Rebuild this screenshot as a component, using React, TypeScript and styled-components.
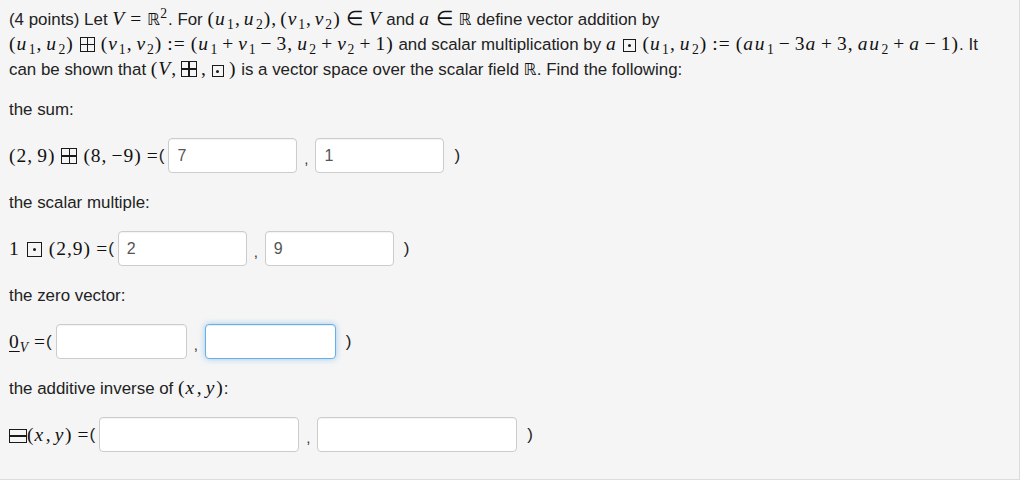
import React from "react";
import styled, { createGlobalStyle, css } from "styled-components";

const GlobalStyle = createGlobalStyle`
  html, body {
    margin: 0;
    padding: 0;
    background: #ffffff;
  }
  * {
    box-sizing: border-box;
  }
`;

const Panel = styled.div`
  width: 1020px;
  height: 480px;
  background-color: #f5f5f5;
  border-right: 1px solid #dcdcdc;
  border-bottom: 1px solid #dcdcdc;
  padding: 7px 9px 0 9px;
  font-family: "Liberation Sans", Arial, sans-serif;
  font-size: 16.9px;
  color: #222;
  overflow: hidden;
`;

const Intro = styled.p`
  margin: 0;
  line-height: 25px;
  white-space: nowrap;
`;

const Label = styled.p`
  margin: 16px 0 0 0;
  line-height: 24px;
`;

const Row = styled.div`
  display: flex;
  align-items: center;
  height: 35px;
  margin-top: 16px;

  & + p {
    margin-top: 18px;
  }
`;

const Math = styled.span`
  font-family: "Liberation Serif", "Times New Roman", serif;
  font-size: 19.5px;
  line-height: 1;
  letter-spacing: 1px;
  color: #111;
  white-space: nowrap;
`;

// TeX italics run wider than Times italics
const Var = styled.i<{ $extra?: number }>`
  font-style: italic;
  letter-spacing: ${(p) => 1 + (p.$extra ?? 0.8)}px;
`;

const Sub = styled.sub`
  font-size: 70%;
  vertical-align: -0.3em;
  line-height: 0;
`;

const Sup = styled.sup`
  font-size: 70%;
  vertical-align: 0.55em;
  line-height: 0;
`;

const DoubleStruck = styled.span`
  font-family: "DejaVu Sans", sans-serif;
  font-size: 0.84em;
  letter-spacing: 0;
`;

const Underlined = styled.span`
  text-decoration: underline;
  text-underline-offset: 3px;
  text-decoration-thickness: 1px;
`;

// spacing around binary operators and relations, as TeX sets them
const Op = styled.span<{ $rel?: boolean; $end?: boolean }>`
  margin-left: ${(p) => (p.$rel ? 5 : 4)}px;
  margin-right: ${(p) => (p.$end ? 0 : p.$rel ? 5 : 4)}px;
`;

const Sep = styled.span<{ $w?: number }>`
  margin-right: ${(p) => p.$w ?? 3}px;
`;

type BoxKind = "plus" | "dot" | "minus";

const BoxOp = styled.span<{ $kind: BoxKind; $size: number; $wide?: number; $gap?: number }>`
  display: inline-block;
  position: relative;
  width: ${(p) => p.$wide ?? p.$size}px;
  height: ${(p) => p.$size}px;
  border: 1.5px solid #1a1a1a;
  vertical-align: -2px;
  margin: 0 ${(p) => p.$gap ?? 5}px;

  ${(p) =>
    (p.$kind === "plus" || p.$kind === "minus") &&
    css`
      &::before {
        content: "";
        position: absolute;
        left: 0;
        right: 0;
        top: 50%;
        height: 1.5px;
        margin-top: -0.75px;
        background: #1a1a1a;
      }
    `}

  ${(p) =>
    p.$kind === "plus" &&
    css`
      &::after {
        content: "";
        position: absolute;
        top: 0;
        bottom: 0;
        left: 50%;
        width: 1.5px;
        margin-left: -0.75px;
        background: #1a1a1a;
      }
    `}

  ${(p) =>
    p.$kind === "dot" &&
    css`
      &::after {
        content: "";
        position: absolute;
        top: 50%;
        left: 50%;
        width: 3px;
        height: 3px;
        margin: -1.5px 0 0 -1.5px;
        border-radius: 50%;
        background: #1a1a1a;
      }
    `}
`;

const Lead = styled.span`
  display: inline-flex;
  align-items: center;
  margin-right: 4px;
  white-space: nowrap;
`;

const Paren = styled.span`
  font-size: 17px;
  color: #222;
`;

const AnswerInput = styled.input<{ $width: number; $focused?: boolean }>`
  width: ${(p) => p.$width}px;
  height: 35px;
  padding: 0 8px;
  border: 1px solid ${(p) => (p.$focused ? "#66afe9" : "#cccccc")};
  border-radius: 4px;
  background: #ffffff;
  font-family: "Liberation Sans", Arial, sans-serif;
  font-size: 16px;
  color: #555;
  outline: none;
  box-shadow: ${(p) =>
    p.$focused
      ? "inset 0 1px 1px rgba(0,0,0,.075), 0 0 6px rgba(102,175,233,.6)"
      : "inset 0 1px 1px rgba(0,0,0,.05)"};
`;

const Comma = styled.span`
  width: 18px;
  text-align: center;
  font-size: 15px;
  padding-top: 6px;
  color: #333;
`;

const Close = styled.span`
  margin-left: 10px;
  font-size: 17px;
  color: #222;
`;

type PairProps = {
  first?: string;
  second?: string;
  width: number;
  focusSecond?: boolean;
};

const Pair = ({ first = "", second = "", width, focusSecond }: PairProps) => (
  <>
    <AnswerInput $width={width} defaultValue={first} />
    <Comma>,</Comma>
    <AnswerInput $width={width} defaultValue={second} $focused={focusSecond} />
    <Close>)</Close>
  </>
);

const U = ({ n }: { n: number }) => (
  <>
    <Var $extra={1.4}>u</Var>
    <Sub>{n}</Sub>
  </>
);

const Vv = ({ n }: { n: number }) => (
  <>
    <Var>v</Var>
    <Sub>{n}</Sub>
  </>
);

export default function App() {
  return (
    <>
      <GlobalStyle />
      <Panel>
        <Intro>
          (4 points) Let{" "}
          <Math>
            <Var $extra={0}>V</Var>
            <Op $rel>=</Op>
            <DoubleStruck>ℝ</DoubleStruck>
            <Sup>2</Sup>
          </Math>
          . For{" "}
          <Math>
            (<U n={1} />,<Sep />
            <U n={2} />
            ),
            <Sep />
            (<Vv n={1} />,<Sep />
            <Vv n={2} />)<Op $rel>∈</Op>
            <Var $extra={0}>V</Var>
          </Math>{" "}
          and{" "}
          <Math>
            <Var>a</Var>
            <Op $rel>∈</Op>
            <DoubleStruck>ℝ</DoubleStruck>
          </Math>{" "}
          define vector addition by
          <br />
          <Math>
            (<U n={1} />,<Sep $w={4} />
            <U n={2} />)
            <BoxOp $kind="plus" $size={15} $gap={6} />
            (<Vv n={1} />,<Sep $w={4} />
            <Vv n={2} />)<Op $rel>:=</Op>(<U n={1} />
            <Op>+</Op>
            <Vv n={1} />
            <Op>−</Op>3,<Sep $w={4} />
            <U n={2} />
            <Op>+</Op>
            <Vv n={2} />
            <Op>+</Op>1)
          </Math>{" "}
          and scalar multiplication by{" "}
          <Math>
            <Var>a</Var>
            <BoxOp $kind="dot" $size={13} $gap={6} />
            (<U n={1} />,<Sep $w={4} />
            <U n={2} />)<Op $rel>:=</Op>(<Var>a</Var>
            <U n={1} />
            <Op>−</Op>3<Var>a</Var>
            <Op>+</Op>3,<Sep $w={4} />
            <Var>a</Var>
            <U n={2} />
            <Op>+</Op>
            <Var>a</Var>
            <Op>−</Op>1)
          </Math>
          . It
          <br />
          can be shown that{" "}
          <Math>
            (<Var $extra={0}>V</Var>,<BoxOp $kind="plus" $size={16} $gap={4} />,
            <BoxOp $kind="dot" $size={12} $gap={5} />)
          </Math>{" "}
          is a vector space over the scalar field{" "}
          <Math>
            <DoubleStruck>ℝ</DoubleStruck>
          </Math>
          . Find the following:
        </Intro>

        <Label>the sum:</Label>
        <Row>
          <Lead>
            <Math>
              (2,<Sep $w={4} />
              9)
              <BoxOp $kind="plus" $size={16} $gap={6} />
              (8,<Sep $w={4} />
              −9)<Op $rel $end>=</Op>
            </Math>
            <Paren>(</Paren>
          </Lead>
          <Pair first="7" second="1" width={129} />
        </Row>

        <Label>the scalar multiple:</Label>
        <Row>
          <Lead>
            <Math>
              1<BoxOp $kind="dot" $size={15} $gap={7} />
              (2,9)<Op $rel $end>=</Op>
            </Math>
            <Paren>(</Paren>
          </Lead>
          <Pair first="2" second="9" width={129} />
        </Row>

        <Label>the zero vector:</Label>
        <Row>
          <Lead>
            <Math>
              <Underlined>0</Underlined>
              <Sub>
                <Var $extra={0}>V</Var>
              </Sub>
              <Op $rel $end>=</Op>
            </Math>
            <Paren>(</Paren>
          </Lead>
          <Pair width={131} focusSecond />
        </Row>

        <Label>
          the additive inverse of{" "}
          <Math>
            (<Var $extra={1.6}>x</Var>,<Sep />
            <Var>y</Var>)
          </Math>
          :
        </Label>
        <Row>
          <Lead>
            <Math>
              <BoxOp $kind="minus" $size={14} $wide={18} $gap={0} />
              (<Var $extra={1.6}>x</Var>,<Sep />
              <Var>y</Var>)<Op $rel $end>=</Op>
            </Math>
            <Paren>(</Paren>
          </Lead>
          <Pair width={200} />
        </Row>
      </Panel>
    </>
  );
}
